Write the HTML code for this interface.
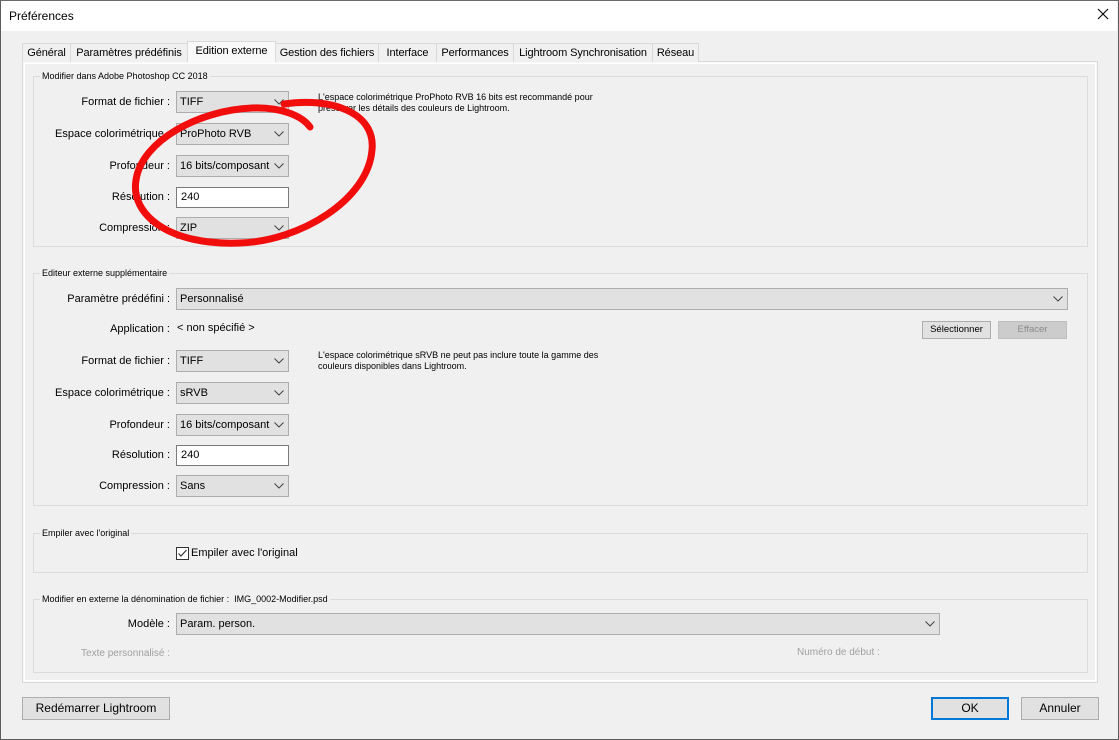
<!DOCTYPE html>
<html><head><meta charset="utf-8"><style>
*{margin:0;padding:0;box-sizing:border-box}
body{width:1119px;height:740px;background:#f0f0f0;font-family:"Liberation Sans",sans-serif;font-size:11px;color:#000;position:relative;overflow:hidden}
.a{position:absolute;white-space:nowrap}
.win{position:absolute;left:0;top:0;width:1119px;height:740px;border:1px solid #5c5c5c;border-top-color:#6a6a6a}
.title{position:absolute;left:1px;top:1px;width:1116px;height:30px;background:#fff}
.tab{position:absolute;top:43px;height:19px;border:1px solid #d9d9d9;border-bottom:none;background:#f0f0f0;text-align:center;line-height:18px;font-size:11px;white-space:nowrap;overflow:hidden;letter-spacing:-0.1px}
.tab.sel{top:41px;height:21px;background:#f9f9f9;z-index:2;line-height:18px}
.panel{position:absolute;left:22px;top:61px;width:1076px;height:622px;border:1px solid #d9d9d9;background:#f9f9f9}
.inner{position:absolute;left:24px;top:63px;width:1072px;height:618px;background:#f0f0f0;border:1px solid #fff}
.grp{position:absolute;border:1px solid #dcdcdc}
.gt{position:absolute;font-size:9px;background:#f0f0f0;padding:0 2px;top:-7px;left:6px;line-height:12px;white-space:nowrap}
.lbl{position:absolute;text-align:right;width:160px;left:10px;font-size:11px;line-height:14px;white-space:nowrap}
.dd{position:absolute;height:22px;background:#e1e1e1;border:1px solid #adadad;font-size:11px;line-height:20px;padding-left:3px;white-space:nowrap}
.dd svg{position:absolute;right:4px;top:7px}
.inp{position:absolute;height:21px;background:#fff;border:1px solid #7a7a7a;font-size:11px;line-height:19px;padding-left:4px}
.note{position:absolute;font-size:9px;line-height:11px;white-space:nowrap}
.btn{position:absolute;background:#e1e1e1;border:1px solid #adadad;text-align:center;white-space:nowrap}
</style></head><body>
<div class="win"></div>
<div class="title"></div>
<div class="a" style="left:9px;top:9px;font-size:12px">Préférences</div>
<svg class="a" style="left:1097px;top:8px" width="12" height="12"><path d="M1 1L11 11M11 1L1 11" stroke="#000" stroke-width="1.1"/></svg>

<div class="panel"></div>
<div class="inner"></div>
<div class="tab" style="left:22px;width:49px">Général</div>
<div class="tab" style="left:70px;width:118px">Paramètres prédéfinis</div>
<div class="tab sel" style="left:187px;width:89px">Edition externe</div>
<div class="tab" style="left:275px;width:104px">Gestion des fichiers</div>
<div class="tab" style="left:378px;width:59px">Interface</div>
<div class="tab" style="left:436px;width:78px">Performances</div>
<div class="tab" style="left:513px;width:140px">Lightroom Synchronisation</div>
<div class="tab" style="left:652px;width:47px">Réseau</div>

<div class="grp" style="left:33px;top:76px;width:1055px;height:171px"><div class="gt">Modifier dans Adobe Photoshop CC 2018</div></div>
<div class="lbl" style="top:95px">Format de fichier :</div>
<div class="dd" style="left:176px;top:91px;width:113px">TIFF<svg width="10" height="6"><path d="M0.5 0.5L5 5L9.5 0.5" fill="none" stroke="#444"/></svg></div>
<div class="lbl" style="top:127px">Espace colorimétrique :</div>
<div class="dd" style="left:176px;top:123px;width:113px">ProPhoto RVB<svg width="10" height="6"><path d="M0.5 0.5L5 5L9.5 0.5" fill="none" stroke="#444"/></svg></div>
<div class="lbl" style="top:159px">Profondeur :</div>
<div class="dd" style="left:176px;top:155px;width:113px">16 bits/composant<svg width="10" height="6"><path d="M0.5 0.5L5 5L9.5 0.5" fill="none" stroke="#444"/></svg></div>
<div class="lbl" style="top:190px">Résolution :</div>
<div class="inp" style="left:176px;top:187px;width:113px">240</div>
<div class="lbl" style="top:221px">Compression :</div>
<div class="dd" style="left:176px;top:217px;width:113px">ZIP<svg width="10" height="6"><path d="M0.5 0.5L5 5L9.5 0.5" fill="none" stroke="#444"/></svg></div>
<div class="note" style="left:318px;top:92px">L'espace colorimétrique ProPhoto RVB 16 bits est recommandé pour<br>préserver les détails des couleurs de Lightroom.</div>

<div class="grp" style="left:33px;top:273px;width:1055px;height:233px"><div class="gt">Editeur externe supplémentaire</div></div>
<div class="lbl" style="top:292px">Paramètre prédéfini :</div>
<div class="dd" style="left:176px;top:288px;width:892px">Personnalisé<svg width="10" height="6"><path d="M0.5 0.5L5 5L9.5 0.5" fill="none" stroke="#444"/></svg></div>
<div class="lbl" style="top:322px">Application :</div>
<div class="a" style="left:177px;top:322px">&lt; non spécifié &gt;</div>
<div class="btn" style="left:922px;top:321px;width:69px;height:18px;font-size:9.5px;line-height:16px">Sélectionner</div>
<div class="btn" style="left:998px;top:321px;width:69px;height:18px;font-size:9.5px;line-height:16px;background:#ccc;border-color:#bfbfbf;color:#8a8a8a">Effacer</div>
<div class="lbl" style="top:354px">Format de fichier :</div>
<div class="dd" style="left:176px;top:350px;width:113px">TIFF<svg width="10" height="6"><path d="M0.5 0.5L5 5L9.5 0.5" fill="none" stroke="#444"/></svg></div>
<div class="lbl" style="top:386px">Espace colorimétrique :</div>
<div class="dd" style="left:176px;top:382px;width:113px">sRVB<svg width="10" height="6"><path d="M0.5 0.5L5 5L9.5 0.5" fill="none" stroke="#444"/></svg></div>
<div class="lbl" style="top:418px">Profondeur :</div>
<div class="dd" style="left:176px;top:414px;width:113px">16 bits/composant<svg width="10" height="6"><path d="M0.5 0.5L5 5L9.5 0.5" fill="none" stroke="#444"/></svg></div>
<div class="lbl" style="top:448px">Résolution :</div>
<div class="inp" style="left:176px;top:445px;width:113px">240</div>
<div class="lbl" style="top:479px">Compression :</div>
<div class="dd" style="left:176px;top:475px;width:113px">Sans<svg width="10" height="6"><path d="M0.5 0.5L5 5L9.5 0.5" fill="none" stroke="#444"/></svg></div>
<div class="note" style="left:318px;top:350px">L'espace colorimétrique sRVB ne peut pas inclure toute la gamme des<br>couleurs disponibles dans Lightroom.</div>

<div class="grp" style="left:33px;top:533px;width:1055px;height:40px"><div class="gt">Empiler avec l'original</div></div>
<svg class="a" style="left:176px;top:547px" width="13" height="13"><rect x="0.5" y="0.5" width="12" height="12" fill="#fff" stroke="#333"/><path d="M2.5 6.5L5 9L10.5 3" fill="none" stroke="#333" stroke-width="1.2"/></svg>
<div class="a" style="left:191px;top:547px">Empiler avec l'original</div>

<div class="grp" style="left:33px;top:599px;width:1055px;height:74px"><div class="gt">Modifier en externe la dénomination de fichier :&nbsp; IMG_0002-Modifier.psd</div></div>
<div class="lbl" style="top:617px">Modèle :</div>
<div class="dd" style="left:176px;top:613px;width:764px">Param. person.<svg width="10" height="6"><path d="M0.5 0.5L5 5L9.5 0.5" fill="none" stroke="#444"/></svg></div>
<div class="lbl" style="top:647px;color:#a0a0a0;font-size:10px">Texte personnalisé :</div>
<div class="a" style="left:797px;top:647px;color:#a0a0a0;font-size:10px">Numéro de début :</div>

<div class="btn" style="left:22px;top:697px;width:148px;height:23px;line-height:21px;font-size:12px">Redémarrer Lightroom</div>
<div class="btn" style="left:931px;top:697px;width:78px;height:23px;line-height:19px;border:2px solid #0078d7;font-size:12px">OK</div>
<div class="btn" style="left:1021px;top:697px;width:78px;height:23px;line-height:21px;font-size:12px">Annuler</div>

<svg class="a" style="left:0;top:0" width="1119" height="740"><path d="M284 104 C330 97 376 112 372 150 C368 200 300 241 240 243 C170 246 130 215 136 180 C142 140 200 110 252 108 C282 107 302 116 310 127" fill="none" stroke="#f20d0d" stroke-width="7" stroke-linecap="round"/></svg>
</body></html>
